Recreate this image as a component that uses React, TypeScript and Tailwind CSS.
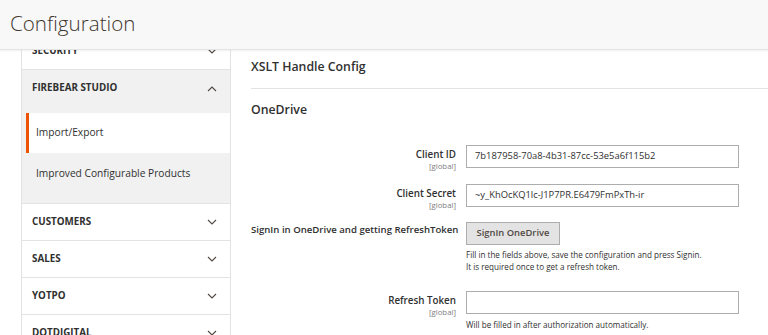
import React from "react";

const Chevron = ({ up = false }: { up?: boolean }) => (
  <svg
    width="10"
    height="6"
    viewBox="0 0 10 6"
    className={up ? "rotate-180" : ""}
    fill="none"
    stroke="#514943"
    strokeWidth="1.1"
  >
    <polyline points="1,1 5,5 9,1" />
  </svg>
);

const SideSection = ({ title }: { title: string }) => (
  <div className="flex h-[37px] items-center justify-between border-b border-[#e3e3e3] bg-white pl-[10px] pr-[13px]">
    <span className="text-[9.8px] font-bold uppercase text-[#303030]">{title}</span>
    <Chevron />
  </div>
);

const Field = ({
  label,
  value,
  note,
}: {
  label: string;
  value: string;
  note?: string;
}) => (
  <div className="grid grid-cols-[205px_273px] gap-x-[10px]">
    <div className="flex flex-col items-end pt-[3px]">
      <span className="whitespace-nowrap text-[9.8px] leading-[13px] font-semibold text-[#303030]">{label}</span>
      <span className="text-[7.8px] leading-[10px] text-[#808080]">[global]</span>
    </div>
    <div>
      <div className="flex h-[23px] items-center border border-[#adadad] bg-white px-[8px] text-[9.4px] text-[#303030]">
        {value}
      </div>
      {note && <p className="mt-[5px] text-[8.1px] leading-[11.5px] text-[#303030]">{note}</p>}
    </div>
  </div>
);

export default function App() {
  return (
    <div
      className="relative h-[335px] w-full overflow-hidden bg-white"
      style={{ fontFamily: '"Open Sans", "Liberation Sans", sans-serif' }}
    >
      <header className="absolute inset-x-0 top-0 z-10 flex h-[50px] items-center border-b border-[#e3e3e3] bg-[#f8f8f8] pb-[2px] pl-[10px] shadow-[0_1px_2px_rgba(0,0,0,0.06)]">
        <h1 className="text-[20.6px] font-light text-[#41362f]">Configuration</h1>
      </header>

      <div className="flex pt-[33px]">
        {/* sidebar */}
        <aside className="ml-[21px] w-[210px] shrink-0 border-x border-[#e3e3e3]">
          <SideSection title="Security" />
          <div className="flex h-[37px] items-center justify-between bg-[#f1f1f1] pl-[10px] pr-[13px]">
            <span className="text-[9.8px] font-bold uppercase text-[#303030]">Firebear Studio</span>
            <Chevron up />
          </div>
          <div className="bg-[#f1f1f1] pt-[6px]">
            <div className="ml-[4px] flex h-[40px] items-center border-l-[3px] border-[#eb5202] bg-white pl-[7px] text-[10.2px] text-[#303030]">
              Import/Export
            </div>
            <div className="h-[50px] pl-[14px] pt-[13px] text-[10.2px] text-[#303030]">
              Improved Configurable Products
            </div>
          </div>
          <div className="border-t border-[#e3e3e3]">
            <SideSection title="Customers" />
            <SideSection title="Sales" />
            <SideSection title="Yotpo" />
            <SideSection title="Dotdigital" />
          </div>
        </aside>

        {/* main */}
        <main className="flex-1 pl-[20px]">
          <div className="border-b border-[#e3e3e3] pb-[12px] pt-[25px] text-[12.3px] leading-[18px] font-semibold text-[#303030]">
            XSLT Handle Config
          </div>
          <div className="pt-[12px] text-[12.3px] leading-[18px] font-semibold text-[#303030]">OneDrive</div>

          <div className="mt-[26px] flex flex-col">
            <Field label="Client ID" value="7b187958-70a8-4b31-87cc-53e5a6f115b2" />
            <div className="h-[13px]" />
            <Field label="Client Secret" value="~y_KhOcKQ1lc-J1P7PR.E6479FmPxTh-ir" />
            <div className="h-[12px]" />
            <div className="grid grid-cols-[205px_273px] gap-x-[10px]">
              <div className="whitespace-nowrap pt-[1px] text-right text-[9.6px] leading-[13px] font-semibold text-[#303030]">
                SignIn in OneDrive and getting RefreshToken
              </div>
              <div>
                <button className="block h-[23px] w-[94px] border border-[#adadad] bg-[#e3e3e3] text-[9.4px] font-semibold text-[#514943]">
                  SignIn OneDrive
                </button>
                <p className="mt-[4px] text-[8.1px] leading-[11.5px] text-[#303030]">
                  Fill in the fields above, save the configuration and press Signin.
                  <br />
                  It is required once to get a refresh token.
                </p>
              </div>
            </div>
            <div className="h-[19px]" />
            <Field
              label="Refresh Token"
              value=""
              note="Will be filled in after authorization automatically."
            />
          </div>
        </main>
      </div>
    </div>
  );
}
